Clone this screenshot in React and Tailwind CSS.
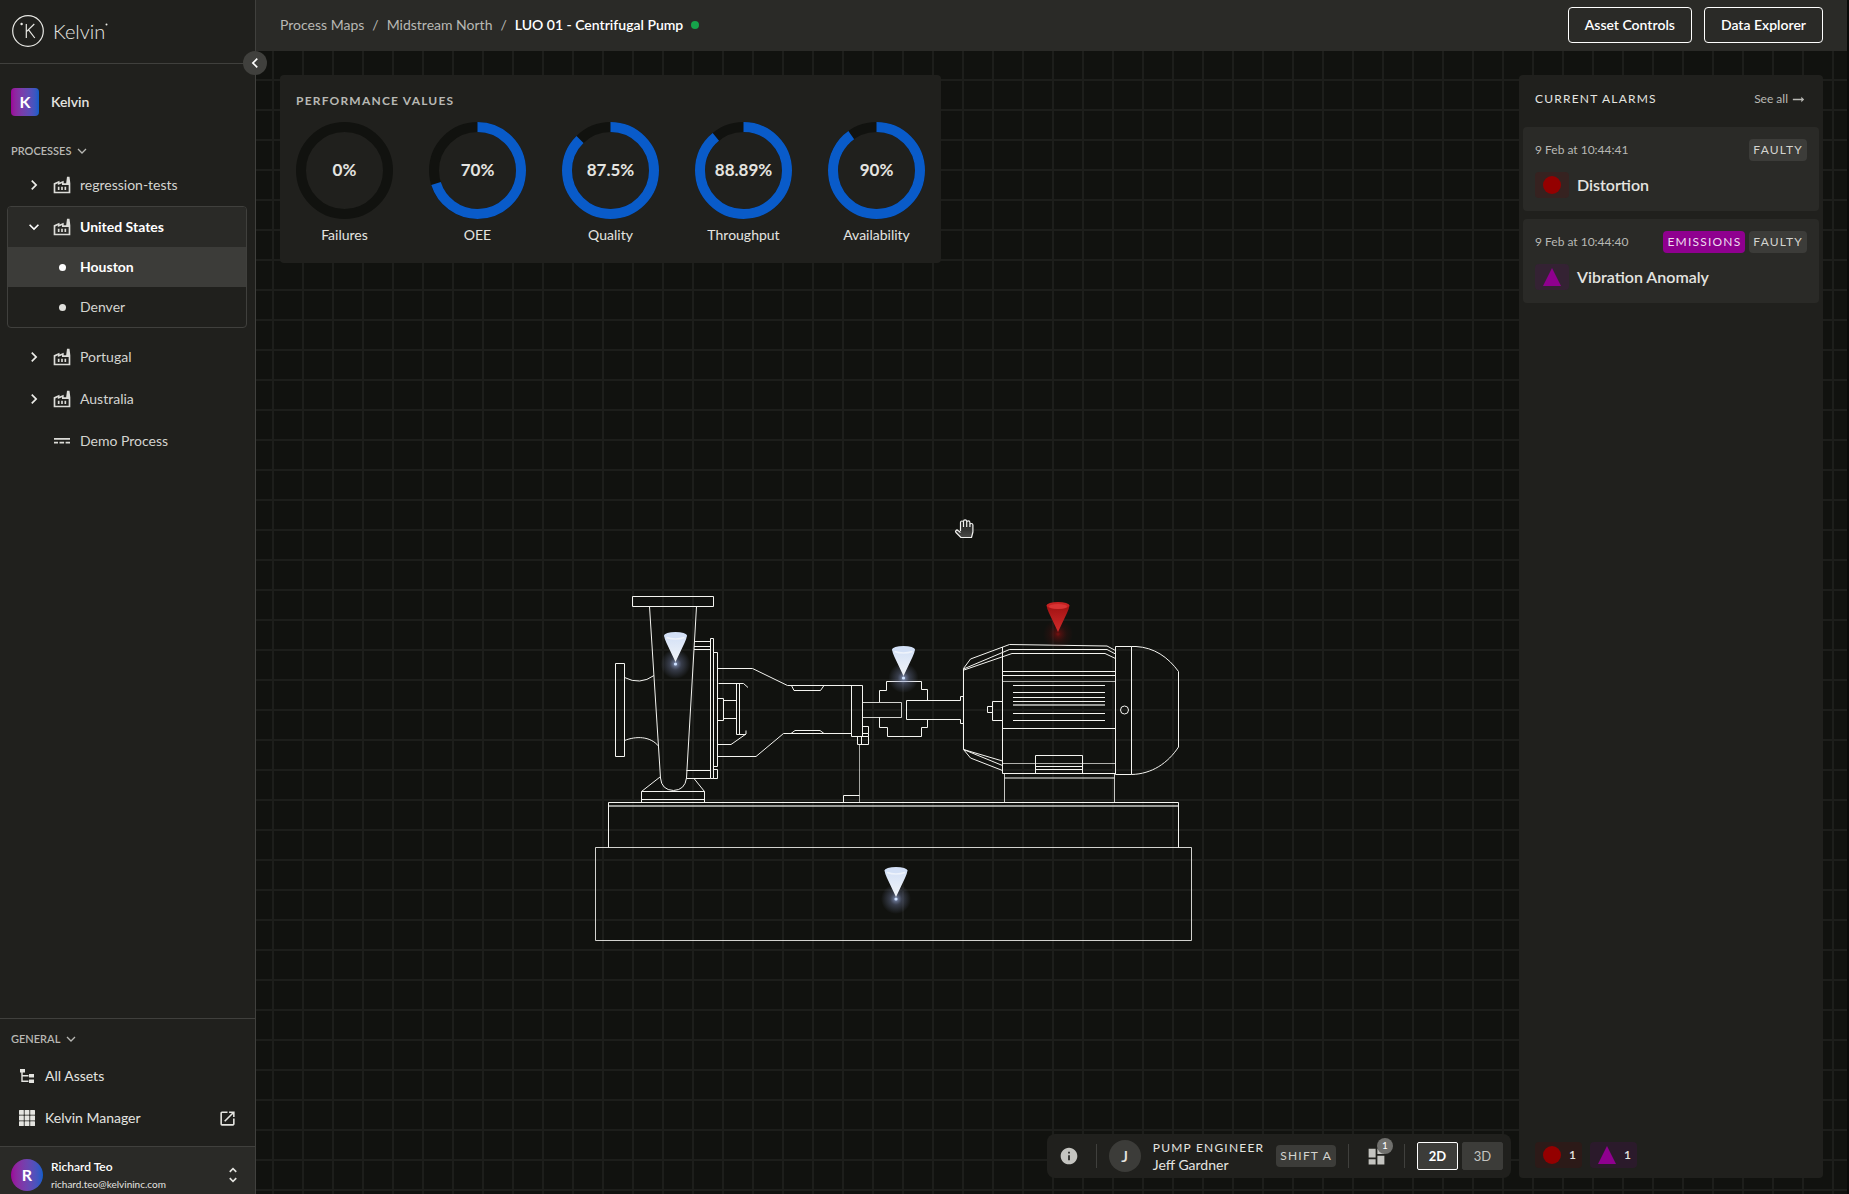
import React, { useState } from 'react';
import {
  MdOutlineFactory,
  MdChevronLeft,
  MdChevronRight,
  MdExpandMore,
  MdOpenInNew,
  MdUnfoldMore,
  MdInfo,
  MdDashboard,
  MdArrowRightAlt,
} from 'react-icons/md';

const GAUGES = [
  { label: 'Failures', value: 0 },
  { label: 'OEE', value: 70 },
  { label: 'Quality', value: 87.5 },
  { label: 'Throughput', value: 88.89 },
  { label: 'Availability', value: 90 },
];

const ALARMS = [
  { time: '9 Feb at 10:44:41', title: 'Distortion', kind: 'circle', tags: ['FAULTY'] },
  { time: '9 Feb at 10:44:40', title: 'Vibration Anomaly', kind: 'triangle', tags: ['EMISSIONS', 'FAULTY'] },
];

const MARKERS = [
  { x: 675.5, y: 660, tone: 'ok' },
  { x: 903.5, y: 674, tone: 'ok' },
  { x: 896, y: 895, tone: 'ok' },
  { x: 1058, y: 630, tone: 'alert' },
];

// ICONS
const SmallChevron = () => (
  <svg width="10" height="6" viewBox="0 0 10 6" fill="none" stroke="currentColor" strokeWidth="1.3">
    <path d="M1 1l4 4 4-4" />
  </svg>
);

const ProcessIcon = () => (
  <svg width="20" height="20" viewBox="0 0 20 20" fill="currentColor">
    <path d="M2 7h16v1.7H2zM2 10.7h4v1.7H2zM7.5 10.7h4.6v1.7H7.5zM13.6 10.7H18v1.7h-4.4z" />
  </svg>
);

const TreeIcon = () => (
  <svg width="16" height="16" viewBox="0 0 16 16" fill="currentColor">
    <path d="M1 1h5v3.4H1zM10 6h5v3.6h-5zM10 11.4h5V15h-5z" />
    <path d="M3 4v9.3h6.5M3 7.8h6.5" fill="none" stroke="currentColor" strokeWidth="1.4" />
  </svg>
);

const AppsIcon = () => (
  <svg width="16" height="16" viewBox="0 0 16 16" fill="currentColor">
    {[0, 5.6, 11.2].map((y) =>
      [0, 5.6, 11.2].map((x) => <rect key={`${x}-${y}`} x={x} y={y} width="4.8" height="4.8" rx="0.5" />)
    )}
  </svg>
);

const SeverityShape = ({ kind }) => (
  <svg width="18" height="18" viewBox="0 0 18 18">
    {kind === 'circle' ? (
      <circle cx="9" cy="9" r="9" fill="#940000" />
    ) : (
      <path d="M9 0l9 18H0z" fill="#8f008f" />
    )}
  </svg>
);

const Tag = ({ children }) => (
  <span
    className={`flex h-[22px] items-center rounded px-1 text-xs tracking-widest ${
      children === 'EMISSIONS' ? 'bg-[#8f008f] text-[#eedcee]' : 'bg-[#3c3c39] text-[#d4d4d0]'
    }`}
  >
    {children}
  </span>
);

// SIDEBAR
const Logo = () => (
  <a href="#home" className="flex h-16 shrink-0 items-center gap-[9px] border-b border-[#40403d] pb-px pl-3 text-[#e8e8e4]">
    <svg width="32" height="32" viewBox="0 0 32 32" fill="none" stroke="currentColor" strokeWidth="1.2">
      <circle cx="16" cy="16" r="15.3" />
      <path d="M14.3 9v14M22.3 9l-7.6 7.4M16.6 14.8L22.8 23" />
      <circle cx="9.6" cy="9" r="0.6" fill="currentColor" />
    </svg>
    <span className="flex items-start">
      <span className="text-xl font-light leading-none">Kelvin</span>
      <svg width="3" height="3" viewBox="0 0 3 3" className="mt-0.5">
        <circle cx="1.5" cy="1.5" r="1" fill="currentColor" />
      </svg>
    </span>
  </a>
);

const TreeRow = ({ label, leaf }) => (
  <a href={`#${label}`} className="flex h-[42px] items-center pl-6 text-[#d4d4d0]">
    <span className="w-7 text-[#ecece8]">{!leaf && <MdChevronRight size={20} />}</span>
    <span className="w-7 text-[#dcdcd8]">{leaf ? <ProcessIcon /> : <MdOutlineFactory size={20} />}</span>
    {label}
  </a>
);

const Sidebar = () => (
  <aside className="relative flex w-64 shrink-0 flex-col border-r border-[#40403d] bg-[#20201d]">
    <Logo />
    <button
      aria-label="Collapse sidebar"
      className="absolute -right-3 top-[51px] z-10 flex h-6 w-6 items-center justify-center rounded-full bg-[#40403d] text-white"
    >
      <MdChevronLeft size={20} />
    </button>

    <div className="mt-6 flex items-center gap-3 pl-[11px] font-semibold">
      <span className="flex h-7 w-7 items-center justify-center rounded-sm bg-linear-to-r from-[#9b0099] to-[#0a5cc8] text-base font-bold text-white">
        K
      </span>
      Kelvin
    </div>

    <button className="mt-[26px] flex h-[18px] items-center gap-1.5 pl-[11px] text-[11px] font-semibold text-[#b8b8b4]">
      PROCESSES <SmallChevron />
    </button>

    <nav className="mt-1">
      <TreeRow label="regression-tests" />
      <div className="ml-[7px] mr-2 mb-2 overflow-hidden rounded border border-[#40403d]">
        <a href="#us" className="flex h-10 items-center bg-[#2a2a27] pl-4 font-bold text-white">
          <span className="w-7"><MdExpandMore size={20} /></span>
          <span className="w-7 text-[#dcdcd8]"><MdOutlineFactory size={20} /></span>
          United States
        </a>
        <a href="#houston" className="flex h-10 items-center bg-[#3c3c39] pl-[51px] font-bold text-white">
          <span className="mr-[14px] h-[7px] w-[7px] rounded-full bg-white" />
          Houston
        </a>
        <a href="#denver" className="flex h-10 items-center pl-[51px] text-[#d4d4d0]">
          <span className="mr-[14px] h-[7px] w-[7px] rounded-full bg-[#e0e0dc]" />
          Denver
        </a>
      </div>
      <TreeRow label="Portugal" />
      <TreeRow label="Australia" />
      <TreeRow label="Demo Process" leaf />
    </nav>

    <div className="mt-auto border-t border-[#40403d] pt-3">
      <button className="flex h-4 items-center gap-1.5 pl-[11px] text-[11px] font-semibold text-[#b8b8b4]">
        GENERAL <SmallChevron />
      </button>
      <nav className="mb-[7px] mt-2">
        <a href="#assets" className="flex h-[42px] items-center gap-[10px] pl-[19px] text-[#e4e4e0]">
          <TreeIcon /> All Assets
        </a>
        <a href="#manager" className="flex h-[42px] items-center gap-[10px] pl-[19px] pr-[18px] text-[#e4e4e0]">
          <AppsIcon /> Kelvin Manager
          <MdOpenInNew size={19} className="ml-auto" />
        </a>
      </nav>
    </div>

    <button className="flex h-12 items-center gap-2 border-t border-[#40403d] bg-[#2a2a27] pl-[11px] pr-3 pt-2 text-left">
      <span className="flex h-8 w-8 items-center justify-center rounded-full bg-linear-to-r from-[#9b0099] to-[#0a5cc8] text-base font-bold text-white">
        R
      </span>
      <span className="flex flex-col">
        <span className="text-xs font-semibold leading-[18px] text-white">Richard Teo</span>
        <span className="text-[10px] leading-4">richard.teo@kelvininc.com</span>
      </span>
      <MdUnfoldMore size={20} className="ml-auto" />
    </button>
  </aside>
);

// TOP BAR
const TopBar = () => (
  <header className="flex h-[51px] shrink-0 items-center justify-between bg-[#2a2a27] px-6 pb-px">
    <nav className="flex items-center gap-2 text-[#b8b8b4]">
      <a href="#maps">Process Maps</a>
      <span>/</span>
      <a href="#midstream">Midstream North</a>
      <span>/</span>
      <span className="font-semibold text-white">LUO 01 - Centrifugal Pump</span>
      <span className="h-2 w-2 rounded-full bg-[#16a34a]" />
    </nav>
    <div className="flex gap-3 font-semibold text-white">
      <button className="h-9 rounded border border-white px-4">Asset Controls</button>
      <button className="h-9 rounded border border-white px-4">Data Explorer</button>
    </div>
  </header>
);

// PERFORMANCE GAUGES
const Gauge = ({ label, value }) => {
  const length = 2 * Math.PI * 43.5;
  return (
    <div className="flex w-[97px] flex-col items-center">
      <div className="grid h-[97px] w-[97px] place-items-center">
        <svg width="97" height="97" viewBox="0 0 97 97" fill="none" strokeWidth="10" className="col-start-1 row-start-1">
          <circle cx="48.5" cy="48.5" r="43.5" stroke="#11120f" />
          <circle
            cx="48.5"
            cy="48.5"
            r="43.5"
            stroke="#095bc9"
            strokeDasharray={`${(length * value) / 100} ${length}`}
            transform="rotate(-90 48.5 48.5)"
          />
        </svg>
        <span className="col-start-1 row-start-1 text-[17px] font-bold">{value}%</span>
      </div>
      <span className="mt-1.5 leading-5 text-[#e4e4e0]">{label}</span>
    </div>
  );
};

const Performance = () => (
  <section className="h-[188px] self-start rounded bg-[#20201d] px-4 pt-4">
    <h2 className="mb-3 text-xs font-bold leading-[19px] tracking-widest text-[#b8b8b4]">PERFORMANCE VALUES</h2>
    <div className="flex gap-9">
      {GAUGES.map((g) => <Gauge key={g.label} {...g} />)}
    </div>
  </section>
);

// PUMP DRAWING
const Marker = ({ x, y, tone }) => (
  <g transform={`translate(${x} ${y})`}>
    <circle cy="3" r="15" fill={`url(#glow-${tone})`} />
    <path d="M-11.5 -25.5Q-11 -22 -9 -18L0 1L9 -18Q11 -22 11.5 -25.5z" fill={`url(#cone-${tone})`} />
    <ellipse cy="-25.5" rx="11.5" ry="3.5" fill={tone === 'ok' ? '#d3e0f6' : '#c62222'} />
    {tone === 'ok' ? (
      <path d="M-9 -23.5Q0 -20.5 9 -23.5" stroke="#eef3fb" strokeWidth="1.5" fill="none" />
    ) : (
      <ellipse cy="-24.5" rx="9" ry="2.5" fill="#d83434" />
    )}
    <circle cy="3" r="1.6" fill={tone === 'ok' ? '#cfe2ff' : '#6e1010'} />
  </g>
);

const PumpDrawing = () => (
  <svg width="632" height="490" viewBox="580 453 632 490" fill="none" role="img" aria-label="Centrifugal pump">
    <defs>
      <radialGradient id="glow-ok">
        <stop offset="0" stopColor="#a9bdf0" stopOpacity="0.75" />
        <stop offset="0.4" stopColor="#7f8cb8" stopOpacity="0.35" />
        <stop offset="1" stopColor="#7f8cb8" stopOpacity="0" />
      </radialGradient>
      <radialGradient id="glow-alert">
        <stop offset="0" stopColor="#8c1010" stopOpacity="0.7" />
        <stop offset="0.6" stopColor="#5c1010" stopOpacity="0.2" />
        <stop offset="1" stopColor="#5c1010" stopOpacity="0" />
      </radialGradient>
      <linearGradient id="cone-ok" x1="0" y1="0" x2="0" y2="1">
        <stop offset="0" stopColor="#d3e0f6" />
        <stop offset="1" stopColor="#f2f5f8" />
      </linearGradient>
      <linearGradient id="cone-alert" x1="0" y1="0" x2="0" y2="1">
        <stop offset="0" stopColor="#a01212" />
        <stop offset="1" stopColor="#d12b2b" />
      </linearGradient>
      <linearGradient id="hand" x1="0" y1="0" x2="0" y2="1">
        <stop offset="0" stopColor="#161715" />
        <stop offset="1" stopColor="#4a4a48" />
      </linearGradient>
    </defs>

    <g stroke="#f4f4f0">
      {/* inlet flange and volute */}
      <path d="M632.5 595.5h81v10h-81z" />
      <path d="M649.5 605.5L660.5 777Q661.5 789 673.5 789.5Q685 789 686.5 777L696.5 605.5" />
      <path d="M615.5 662.5h9v93h-9z" />
      <path d="M624.5 676.5Q640 684.5 654 674.5M624.5 739.5C636 735 650 735 658.5 745" />
      <path d="M710.5 637.5h3v140h-3zM713.5 651.5h4v114h-4zM713.5 768.5h4v9h-4z" />
      <path d="M694.5 640.5h16M694 645.5h16.5M694 648.5h16.5M686.5 769.5h24M686.5 777.5h24" />
      <path d="M660 776L641.5 790.5V801M641.5 790.5H704.5V801M694 777.5L704.5 790.5M641.5 798.5h63" />

      {/* bearing housing */}
      <path d="M718 667.5H752.5L787.5 684.5H862.5V735.5H851.5V684.5" />
      <path d="M718 755.5H756L783.5 732.5H851.5" />
      <path d="M791.5 684.5L794 689.5H820.5L824 684.5M791 732.5L795 729.5H820L824 732.5" />
      <path d="M718.5 682.5H743.5L748 686.5M736.5 682.5V733.5H746M739.5 682.5V733.5" />
      <path d="M718 743.5H731L746 733V729.5" />
      <path d="M717.5 697.5h6v22h-6M723.5 699.5h13M723.5 717.5h13" />
      <path d="M862.5 725.5h6v7h-6M857.5 735.5h11v8h-11zM861.5 735.5v8M868.5 732.5v3" />
      <path d="M859.5 743.5V801" opacity="0.65" />
      <path d="M843.5 801V794.5H859.5" />

      {/* coupling */}
      <path d="M862.5 701.5H901.5V716.5H862.5" opacity="0.85" />
      <path d="M879.5 701V689.5H886.5V680.5H921.5V688.5H927.5V699" />
      <path d="M879.5 716V726.5H887.5V735.5H921.5V726.5H927.5V718.5" />
      <path d="M963.5 695.5H960.5V699.5H906.5V718.5H960.5V722.5H963.5" />

      {/* motor */}
      <path d="M963.5 748.5V667.5L970.5 658L1009.5 643.5L1107 645L1115.5 649.5" />
      <path d="M963.5 668L1009.5 648.5H1107L1115.5 653" />
      <path d="M964 669L1012 652.5H1105L1115.5 657.5" />
      <path d="M963.5 748.5L1002.5 760M963.5 748.5L1002.5 764.5M963.5 748.5L970.5 757L1002.5 769.5" />
      <path d="M1002.5 646V772.5H1115.5" />
      <path d="M1002.5 700.5H992.5V719.5H1002.5M992.5 705.5h-5v6h5" />
      <path d="M1002.5 670.5h113M1002.5 674.5h113M1002.5 727.5h113" />
      <path d="M1002.5 680.5h113M1002.5 762.5h113" opacity="0.7" />
      <path d="M1013 684.5h92M1013 691.5h92M1013 696.5h92M1013 700.5h92M1013 712.5h92M1013 719.5h92" />
      <path d="M1013 704h92" strokeWidth="2" opacity="0.6" />
      <path d="M1115.5 645.5h16v128h-16z" />
      <path d="M1131.5 645.5H1136C1154 646.5 1168 656 1178.5 670.5V746C1168 762 1152 773 1131.5 773.5" />
      <circle cx="1124.5" cy="709" r="4" />
      <path d="M1035.5 772.5v-18h47v18M1035.5 765.5h47M1035.5 768.5h47" />
      <path d="M1004.5 772.5V801M1114.5 773V801" opacity="0.8" />
      <path d="M1004.5 777h110" strokeWidth="2" opacity="0.5" />

      {/* skid */}
      <path d="M608.5 846.5V801.5H1178.5V846.5" />
      <path d="M608.5 805h570" strokeWidth="2" opacity="0.6" />
      <path d="M595.5 846.5h596v93h-596z" opacity="0.85" />
    </g>

    {MARKERS.map((m) => <Marker key={`${m.x}-${m.y}`} {...m} />)}

    {/* grab handle */}
    <path
      d="M960.5 530V521.5a1.5 1.5 0 0 1 3 0V520.5a1.6 1.6 0 0 1 3.2 0V521.5a1.6 1.6 0 0 1 3.2 0V524a1.5 1.5 0 0 1 3 0V531L971.5 536.5H961L956 531.5a1.4 1.4 0 0 1 2-2L960.5 531.5M963.5 521.5V526M966.7 521.5V526M969.9 523V526"
      fill="url(#hand)"
      stroke="#f0f0ee"
      strokeWidth="1.2"
      strokeLinejoin="round"
    />
  </svg>
);

// BOTTOM TOOLBAR
const Divider = () => <span className="h-6 w-px bg-[#40403d]" />;

const Toolbar = () => {
  const [view, setView] = useState('2D');
  return (
    <div className="flex h-11 items-center self-end rounded-lg bg-[#20201d] pl-3 pr-2">
      <button aria-label="Information" className="mr-[17px] text-[#c4c4c0]"><MdInfo size={20} /></button>
      <Divider />
      <span className="ml-3 mr-3 flex h-8 w-8 items-center justify-center rounded-full bg-[#3c3c39] text-base font-semibold">J</span>
      <div className="mr-3 flex flex-col">
        <span className="text-xs leading-[17px] tracking-widest">PUMP ENGINEER</span>
        <span className="leading-[17px]">Jeff Gardner</span>
      </div>
      <Tag>SHIFT A</Tag>
      <span className="w-3" />
      <Divider />
      <button aria-label="Widgets" className="relative mx-[17px] text-[#c4c4c0]">
        <MdDashboard size={21} />
        <span className="absolute -right-1.5 -top-2 flex h-4 w-4 items-center justify-center rounded-full bg-[#70706d] text-[10px] text-white">
          1
        </span>
      </button>
      <Divider />
      <div className="ml-3 flex gap-1">
        {['2D', '3D'].map((v) => (
          <button
            key={v}
            onClick={() => setView(v)}
            className={`h-7 w-[41px] rounded-xs border bg-[#3c3c39] text-[13px] ${
              view === v ? 'border-white font-bold text-white' : 'border-[#3c3c39] text-[#c4c4c0]'
            }`}
          >
            {v}
          </button>
        ))}
      </div>
    </div>
  );
};

// ALARMS
const Alarms = () => (
  <aside className="flex w-[304px] shrink-0 flex-col rounded bg-[#20201d] px-1">
    <div className="flex h-[52px] items-center justify-between px-3 pb-1">
      <h2 className="text-xs tracking-widest">CURRENT ALARMS</h2>
      <a href="#alarms" className="flex items-center gap-0.5 text-xs text-[#b8b8b4]">
        See all <MdArrowRightAlt size={17} />
      </a>
    </div>
    <ul className="flex flex-col gap-2">
      {ALARMS.map((a) => (
        <li key={a.time} className="h-[84px] rounded bg-[#2a2a27] px-3 pt-3">
          <div className="flex h-[22px] items-center gap-1">
            <span className="mr-auto text-xs text-[#b8b8b4]">{a.time}</span>
            {a.tags.map((t) => <Tag key={t}>{t}</Tag>)}
          </div>
          <div className="mt-[11px] flex items-center gap-2">
            <span
              className={`flex h-[26px] w-[34px] items-center justify-center rounded ${
                a.kind === 'circle' ? 'bg-[#362220]' : 'bg-[#342233]'
              }`}
            >
              <SeverityShape kind={a.kind} />
            </span>
            <span className="text-base font-semibold">{a.title}</span>
          </div>
        </li>
      ))}
    </ul>
    <div className="mt-auto flex gap-2 pb-2.5 pl-3 text-xs font-semibold">
      <span className="flex h-[26px] w-[47px] items-center gap-2 rounded bg-[#2c1a18] pl-2"><SeverityShape kind="circle" />1</span>
      <span className="flex h-[26px] w-[47px] items-center gap-2 rounded bg-[#2b1a2b] pl-2"><SeverityShape kind="triangle" />1</span>
    </div>
  </aside>
);

const App = () => (
  <div className="flex h-screen bg-[#090908] pr-0.5 font-[Lato,'Open_Sans',sans-serif] text-sm text-[#e4e4e0]">
    <Sidebar />
    <div className="flex min-w-0 flex-1 flex-col">
      <TopBar />
      <main className="flex min-h-0 flex-1 gap-2 bg-[#11120f] bg-[linear-gradient(to_right,#1d1e1b_2px,transparent_2px),linear-gradient(to_bottom,#1d1e1b_2px,transparent_2px)] bg-size-[30px_30px] bg-position-[16px_28px] px-6 pb-4 pt-6">
        <div className="flex min-w-0 flex-1 flex-col">
          <Performance />
          <div className="flex min-h-0 flex-1 items-center justify-center">
            <PumpDrawing />
          </div>
          <Toolbar />
        </div>
        <Alarms />
      </main>
    </div>
  </div>
);

export default App;
